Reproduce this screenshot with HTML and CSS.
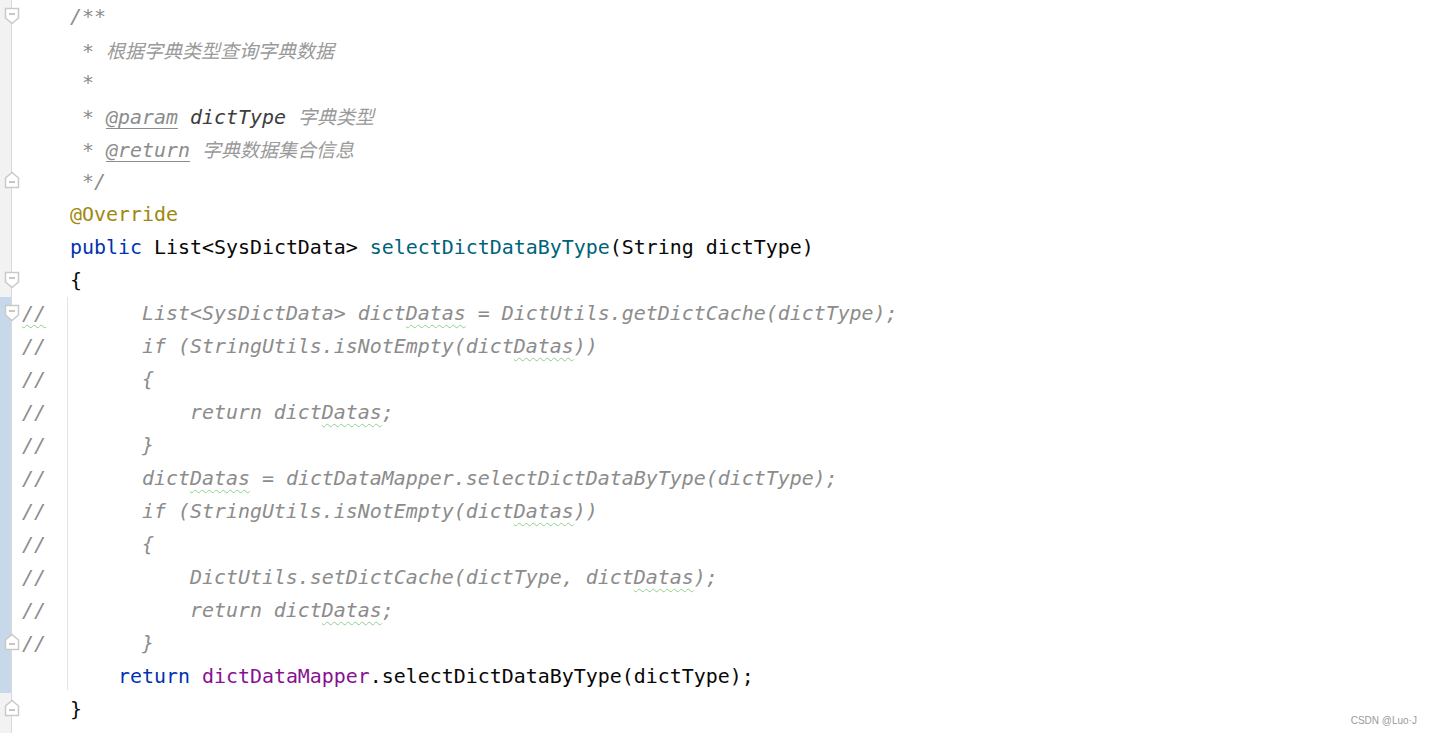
FILE: index.html
```html
<!DOCTYPE html>
<html lang="zh">
<head>
<meta charset="utf-8">
<title>selectDictDataByType</title>
<link rel="stylesheet" href="styles.css">
</head>
<body>
<div class="editor">
  <div class="ln"><span class="g"></span><span class="fold down"><svg viewBox="0 0 16 18" width="16" height="18"><path d="M1.5 1.5H14.5V11L8 16.5L1.5 11Z"/><line x1="5" y1="7" x2="11" y2="7"/></svg></span><span class="code c">    /**</span></div>
  <div class="ln"><span class="g"></span><span class="code c">     * <span class="cjk">根据字典类型查询字典数据</span></span></div>
  <div class="ln"><span class="g"></span><span class="code c">     *</span></div>
  <div class="ln"><span class="g"></span><span class="code c">     * <span class="tag">@param</span> <span class="pn">dictType</span> <span class="cjk">字典类型</span></span></div>
  <div class="ln"><span class="g"></span><span class="code c">     * <span class="tag">@return</span> <span class="cjk">字典数据集合信息</span></span></div>
  <div class="ln"><span class="g"></span><span class="fold up"><svg viewBox="0 0 16 18" width="16" height="18"><path d="M1.5 16.5H14.5V7L8 1.5L1.5 7Z"/><line x1="5" y1="11" x2="11" y2="11"/></svg></span><span class="code c">     */</span></div>
  <div class="ln"><span class="g"></span><span class="code">    <span class="ann">@Override</span></span></div>
  <div class="ln"><span class="g"></span><span class="code">    <span class="kw">public</span> List&lt;SysDictData&gt; <span class="fn">selectDictDataByType</span>(String dictType)</span></div>
  <div class="ln"><span class="g"></span><span class="fold down"><svg viewBox="0 0 16 18" width="16" height="18"><path d="M1.5 1.5H14.5V11L8 16.5L1.5 11Z"/><line x1="5" y1="7" x2="11" y2="7"/></svg></span><span class="code">    {</span></div>
  <div class="block">
    <div class="ln chg"><span class="g"></span><span class="fold down"><svg viewBox="0 0 16 18" width="16" height="18"><path d="M1.5 1.5H14.5V11L8 16.5L1.5 11Z"/><line x1="5" y1="7" x2="11" y2="7"/></svg></span><span class="code c"><span class="typo">//</span>        List&lt;SysDictData&gt; dict<span class="typo">Datas</span> = DictUtils.getDictCache(dictType);</span></div>
    <div class="ln chg"><span class="g"></span><span class="code c">//        if (StringUtils.isNotEmpty(dict<span class="typo">Datas</span>))</span></div>
    <div class="ln chg"><span class="g"></span><span class="code c">//        {</span></div>
    <div class="ln chg"><span class="g"></span><span class="code c">//            return dict<span class="typo">Datas</span>;</span></div>
    <div class="ln chg"><span class="g"></span><span class="code c">//        }</span></div>
    <div class="ln chg"><span class="g"></span><span class="code c">//        dict<span class="typo">Datas</span> = dictDataMapper.selectDictDataByType(dictType);</span></div>
    <div class="ln chg"><span class="g"></span><span class="code c">//        if (StringUtils.isNotEmpty(dict<span class="typo">Datas</span>))</span></div>
    <div class="ln chg"><span class="g"></span><span class="code c">//        {</span></div>
    <div class="ln chg"><span class="g"></span><span class="code c">//            DictUtils.setDictCache(dictType, dict<span class="typo">Datas</span>);</span></div>
    <div class="ln chg"><span class="g"></span><span class="code c">//            return dict<span class="typo">Datas</span>;</span></div>
    <div class="ln chg"><span class="g"></span><span class="fold up"><svg viewBox="0 0 16 18" width="16" height="18"><path d="M1.5 16.5H14.5V7L8 1.5L1.5 7Z"/><line x1="5" y1="11" x2="11" y2="11"/></svg></span><span class="code c">//        }</span></div>
    <div class="ln chg"><span class="g"></span><span class="code">        <span class="kw">return</span> <span class="fld">dictDataMapper</span>.selectDictDataByType(dictType);</span></div>
  </div>
  <div class="ln"><span class="g"></span><span class="fold up"><svg viewBox="0 0 16 18" width="16" height="18"><path d="M1.5 16.5H14.5V7L8 1.5L1.5 7Z"/><line x1="5" y1="11" x2="11" y2="11"/></svg></span><span class="code">    }</span></div>
  <div class="ln last"><span class="g"></span></div>
</div>
<div class="mark">CSDN @Luo·J</div>
</body>
</html>
```
FILE: styles.css
```css
html, body {
  margin: 0;
  padding: 0;
  background: #ffffff;
  height: 100%;
  overflow: hidden;
}
.editor {
  font-family: "DejaVu Sans Mono", "Liberation Mono", "Noto Sans CJK SC", monospace;
  font-size: 19.93px;
  color: #080808;
  height: 100%;
  display: flex;
  flex-direction: column;
}
.block {
  position: relative;
}
.block::before {
  content: "";
  position: absolute;
  left: 67px;
  top: 0;
  bottom: 3px;
  width: 1px;
  background: #e3e3e3;
}
.ln {
  position: relative;
  display: flex;
  height: 33px;
  line-height: 33px;
  flex: none;
}
.ln.last {
  flex: 1;
}
.g {
  flex: none;
  width: 11px;
  background: #f2f2f2;
  border-right: 1px solid #d9d9d9;
}
.ln.chg .g {
  background: #c6d8ea;
}
.code {
  padding-left: 10px;
  white-space: pre;
}
.fold {
  position: absolute;
  left: 4px;
  width: 16px;
  height: 18px;
  line-height: 0;
}
.fold.down { top: 7px; }
.fold.up { top: 6px; }
.fold path {
  fill: #ffffff;
  stroke: #c9c9c9;
  stroke-width: 1.5;
}
.fold line {
  stroke: #b5b5b5;
  stroke-width: 1.5;
}
.c {
  color: #8c8c8c;
  font-style: italic;
}
.cjk {
  font-family: "Noto Sans CJK SC", sans-serif;
  font-size: 19px;
  color: #9a9a9a;
}
.tag {
  text-decoration: underline;
  text-decoration-color: #8c8c8c;
  text-underline-offset: 4px;
  text-decoration-thickness: 1px;
}
.pn {
  color: #3d3d3d;
}
.typo {
  text-decoration: underline wavy #8fcf8c;
  text-decoration-thickness: 1px;
  text-underline-offset: 4px;
}
.kw { color: #0033b3; }
.ann { color: #9e880d; }
.fn { color: #00627a; }
.fld { color: #871094; }
.mark {
  position: absolute;
  right: 14px;
  bottom: 7px;
  font-family: "Liberation Sans", Arial, sans-serif;
  font-size: 10px;
  color: #9a9a9a;
}
```
